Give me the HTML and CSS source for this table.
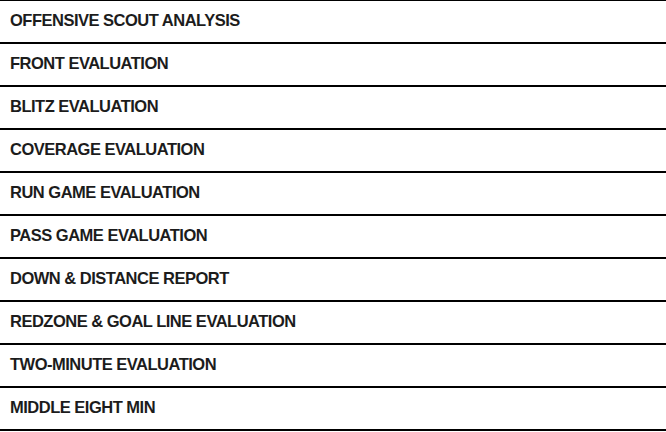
FILE: index.html
```html
<!DOCTYPE html>
<html>
<head>
<meta charset="utf-8">
<link rel="stylesheet" href="styles.css">
</head>
<body>
<ul class="list">
  <li class="item">OFFENSIVE SCOUT ANALYSIS</li>
  <li class="item">FRONT EVALUATION</li>
  <li class="item">BLITZ EVALUATION</li>
  <li class="item">COVERAGE EVALUATION</li>
  <li class="item">RUN GAME EVALUATION</li>
  <li class="item">PASS GAME EVALUATION</li>
  <li class="item">DOWN &amp; DISTANCE REPORT</li>
  <li class="item">REDZONE &amp; GOAL LINE EVALUATION</li>
  <li class="item">TWO-MINUTE EVALUATION</li>
  <li class="item">MIDDLE EIGHT MIN</li>
</ul>
</body>
</html>
```
FILE: styles.css
```css
html, body {
  margin: 0;
  padding: 0;
  background: #fff;
}
.list {
  list-style: none;
  margin: 0;
  padding: 0;
  border-top: 1px solid #000;
}
.item {
  box-sizing: border-box;
  height: 43px;
  border-bottom: 2px solid #000;
  padding: 0 0 2px 10px;
  display: flex;
  align-items: center;
  font-family: "Liberation Sans", Arial, sans-serif;
  font-weight: bold;
  font-size: 16.5px;
  letter-spacing: -0.5px;
  color: #1c1c1c;
}
```
